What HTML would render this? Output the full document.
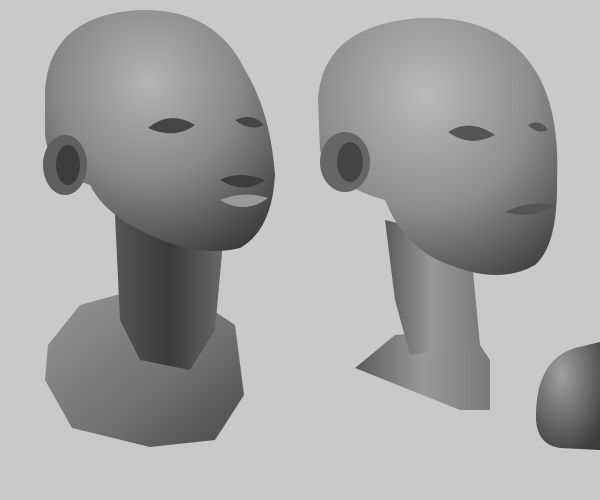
<!DOCTYPE html>
<html><head><meta charset="utf-8"><style>
html,body{margin:0;padding:0;background:#c9c9c9;width:600px;height:500px;overflow:hidden}
</style></head><body>
<svg width="600" height="500" viewBox="0 0 600 500" xmlns="http://www.w3.org/2000/svg">
<defs>
<radialGradient id="g1" cx="0.45" cy="0.3" r="0.8">
<stop offset="0" stop-color="#b4b4b4"/><stop offset="0.5" stop-color="#888"/><stop offset="1" stop-color="#3a3a3a"/>
</radialGradient>
<radialGradient id="g2" cx="0.45" cy="0.3" r="0.8">
<stop offset="0" stop-color="#bababa"/><stop offset="0.55" stop-color="#8e8e8e"/><stop offset="1" stop-color="#444"/>
</radialGradient>
<linearGradient id="n1" x1="0" y1="0" x2="1" y2="0">
<stop offset="0" stop-color="#555"/><stop offset="0.5" stop-color="#3a3a3a"/><stop offset="1" stop-color="#6a6a6a"/>
</linearGradient>
<linearGradient id="b1" x1="0" y1="0" x2="1" y2="1">
<stop offset="0" stop-color="#959595"/><stop offset="0.6" stop-color="#707070"/><stop offset="1" stop-color="#484848"/>
</linearGradient>
<linearGradient id="n2" x1="0" y1="0" x2="1" y2="0">
<stop offset="0" stop-color="#5a5a5a"/><stop offset="0.5" stop-color="#999"/><stop offset="1" stop-color="#7a7a7a"/>
</linearGradient>
<radialGradient id="g3" cx="0.4" cy="0.3" r="0.8">
<stop offset="0" stop-color="#a0a0a0"/><stop offset="1" stop-color="#3d3d3d"/>
</radialGradient>
</defs>
<path d="M48,345 L80,305 L135,290 L205,305 L235,325 L244,395 L215,440 L150,447 L72,428 L45,380 Z" fill="url(#b1)"/>
<path d="M115,215 L225,220 L215,330 L190,370 L140,360 L120,320 Z" fill="url(#n1)"/>
<path d="M45,90 Q50,15 140,10 Q215,8 245,70 Q270,110 275,175 Q272,230 240,248 Q200,258 150,235 Q105,215 90,185 Q45,170 45,130 Z" fill="url(#g1)"/>
<ellipse cx="65" cy="165" rx="22" ry="30" fill="#5f5f5f"/>
<ellipse cx="68" cy="165" rx="12" ry="20" fill="#3c3c3c"/>
<path d="M148,128 Q170,110 195,125 Q175,140 148,128Z" fill="#454545"/>
<path d="M235,120 Q252,112 264,125 Q250,132 235,120Z" fill="#454545"/>
<path d="M220,180 Q240,170 265,180 Q245,195 220,180Z" fill="#3d3d3d"/>
<path d="M220,200 Q245,190 268,198 Q245,215 220,200Z" fill="#9a9a9a"/>
<path d="M355,368 L395,335 L470,330 L490,360 L490,410 L460,410 Z" fill="url(#n2)"/>
<path d="M385,220 L470,240 L480,345 L410,355 L395,300 Z" fill="url(#n2)"/>
<path d="M318,100 Q322,25 420,18 Q500,15 535,70 Q560,110 557,180 Q558,245 535,265 Q500,285 450,265 Q405,250 385,200 Q330,185 320,150 Z" fill="url(#g2)"/>
<ellipse cx="345" cy="162" rx="25" ry="30" fill="#666"/>
<ellipse cx="350" cy="162" rx="13" ry="20" fill="#444"/>
<path d="M448,132 Q470,118 495,135 Q470,148 448,132Z" fill="#555"/>
<path d="M528,125 Q540,118 548,130 Q538,135 528,125Z" fill="#555"/>
<path d="M505,212 Q530,200 555,205 Q535,220 505,212Z" fill="#555"/>
<path d="M536,420 Q535,360 575,348 L600,342 L600,450 L560,448 Q538,445 536,420Z" fill="url(#g3)"/>
</svg>
</body></html>
